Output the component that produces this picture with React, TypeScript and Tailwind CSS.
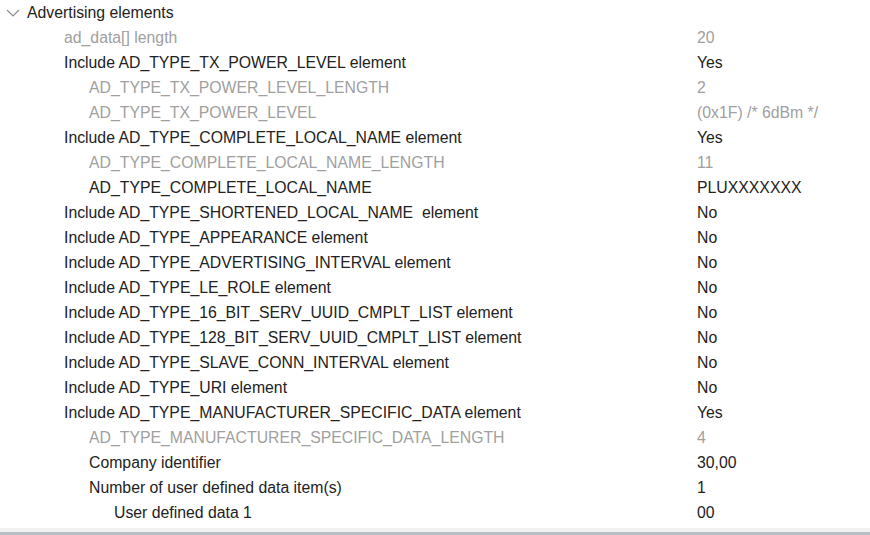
import React from "react";

type Row = { label: string; value: string; level: number; muted?: boolean };

const rows: Row[] = [
  { label: "ad_data[] length", value: "20", level: 1, muted: true },
  { label: "Include AD_TYPE_TX_POWER_LEVEL element", value: "Yes", level: 1 },
  { label: "AD_TYPE_TX_POWER_LEVEL_LENGTH", value: "2", level: 2, muted: true },
  { label: "AD_TYPE_TX_POWER_LEVEL", value: "(0x1F) /* 6dBm */", level: 2, muted: true },
  { label: "Include AD_TYPE_COMPLETE_LOCAL_NAME element", value: "Yes", level: 1 },
  { label: "AD_TYPE_COMPLETE_LOCAL_NAME_LENGTH", value: "11", level: 2, muted: true },
  { label: "AD_TYPE_COMPLETE_LOCAL_NAME", value: "PLUXXXXXXX", level: 2 },
  { label: "Include AD_TYPE_SHORTENED_LOCAL_NAME  element", value: "No", level: 1 },
  { label: "Include AD_TYPE_APPEARANCE element", value: "No", level: 1 },
  { label: "Include AD_TYPE_ADVERTISING_INTERVAL element", value: "No", level: 1 },
  { label: "Include AD_TYPE_LE_ROLE element", value: "No", level: 1 },
  { label: "Include AD_TYPE_16_BIT_SERV_UUID_CMPLT_LIST element", value: "No", level: 1 },
  { label: "Include AD_TYPE_128_BIT_SERV_UUID_CMPLT_LIST element", value: "No", level: 1 },
  { label: "Include AD_TYPE_SLAVE_CONN_INTERVAL element", value: "No", level: 1 },
  { label: "Include AD_TYPE_URI element", value: "No", level: 1 },
  { label: "Include AD_TYPE_MANUFACTURER_SPECIFIC_DATA element", value: "Yes", level: 1 },
  { label: "AD_TYPE_MANUFACTURER_SPECIFIC_DATA_LENGTH", value: "4", level: 2, muted: true },
  { label: "Company identifier", value: "30,00", level: 2 },
  { label: "Number of user defined data item(s)", value: "1", level: 2 },
  { label: "User defined data 1", value: "00", level: 3 },
];

const indent: Record<number, string> = {
  1: "pl-[64px]",
  2: "pl-[89px]",
  3: "pl-[114px]",
};

export default function App() {
  return (
    <div
      className="w-[870px] h-[535px] bg-white flex flex-col overflow-hidden text-[15.8px] text-[#222222]"
      style={{ fontFamily: '"Liberation Sans", Arial, sans-serif' }}
    >
      <div className="flex-1 flex flex-col">
        <div className="h-[25px] flex items-center">
          <div className="w-[27px] flex items-center justify-center">
            <svg width="14" height="8" viewBox="0 0 14 8" className="ml-[-1px]">
              <path d="M1 1 L7 7 L13 1" fill="none" stroke="#8a8a8a" strokeWidth="1.2" />
            </svg>
          </div>
          <span>Advertising elements</span>
        </div>
        {rows.map((r, i) => (
          <div key={i} className="h-[25px] flex items-center">
            <div className={`w-[697px] shrink-0 whitespace-pre ${indent[r.level]} ${r.muted ? "text-[#a0a0a0]" : ""}`}>
              {r.label}
            </div>
            <div className={`whitespace-pre ${r.muted ? "text-[#a0a0a0]" : ""}`}>{r.value}</div>
          </div>
        ))}
      </div>
      <div className="h-[4px] bg-[#f0f0f0]" />
      <div className="h-[3px] bg-[#b7bfc4]" />
    </div>
  );
}
